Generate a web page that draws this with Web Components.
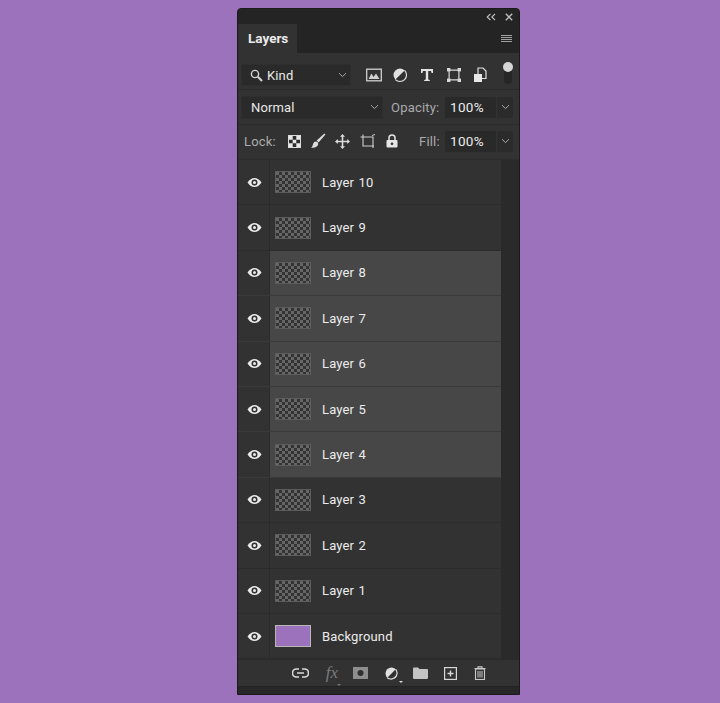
<!DOCTYPE html>
<html>
<head>
<meta charset="utf-8">
<title>Layers</title>
<style>
html, body { margin: 0; height: 100%; }
body {
    background: #9d72bd;
    padding: 8px 0 0 237px;
    box-sizing: border-box;
    overflow: hidden;
    font-family: Roboto, "Open Sans", sans-serif;
}
</style>
</head>
<body>
<ps-panel>
    <ps-tabbar label="Layers"></ps-tabbar>
    <ps-filterbar></ps-filterbar>
    <ps-blendbar></ps-blendbar>
    <ps-lockbar></ps-lockbar>
    <ps-layerlist>
        <ps-layer name="Layer 10"></ps-layer>
        <ps-layer name="Layer 9"></ps-layer>
        <ps-layer name="Layer 8" selected></ps-layer>
        <ps-layer name="Layer 7" selected></ps-layer>
        <ps-layer name="Layer 6" selected></ps-layer>
        <ps-layer name="Layer 5" selected></ps-layer>
        <ps-layer name="Layer 4" selected></ps-layer>
        <ps-layer name="Layer 3"></ps-layer>
        <ps-layer name="Layer 2"></ps-layer>
        <ps-layer name="Layer 1"></ps-layer>
        <ps-layer name="Background" fill></ps-layer>
    </ps-layerlist>
    <ps-footer></ps-footer>
</ps-panel>

<script>
const chevron = `<svg width="9" height="6" viewBox="0 0 9 6" fill="none" stroke="#a8a8a8" stroke-width="1"><path d="M1 1.200 4.500 4.600 8 1.200"/></svg>`

function makeEl(name, css, html) {
    class El extends HTMLElement {
        constructor() {
            super()
            this.attachShadow({mode: 'open'})
            this.shadowRoot.innerHTML = `<style>${css}</style>${typeof html == "function" ? html(this) : html}`
        }
    }
    customElements.define(name, El)
}

makeEl("ps-panel", `
:host {
    display: flex;
    flex-direction: column;
    width: 283px;
    height: 687px;
    box-sizing: border-box;
    border: 1px solid #1a1a1a;
    border-radius: 4px 4px 0 0;
    background: #262626;
    color: #e6e6e6;
    overflow: hidden;
}
`, `<slot></slot>`)

makeEl("ps-tabbar", `
:host { display: block; flex: none; background: #242424; }
.top {
    height: 15px;
    display: flex;
    justify-content: flex-end;
    align-items: center;
    gap: 9px;
    padding-right: 6px;
}
.tabs {
    height: 29px;
    display: flex;
    justify-content: space-between;
    align-items: center;
    padding-right: 7px;
}
.tab {
    width: 59px;
    height: 29px;
    line-height: 28px;
    background: #323232;
    box-sizing: border-box;
    padding-left: 10px;
    font-size: 13.5px;
    font-weight: 700;
    color: #eaeaea;
}
`, host => `
<div class="top">
    <svg width="10" height="8" viewBox="0 0 10 8" fill="none" stroke="#bdbdbd" stroke-width="1.100"><path d="M4.400 1 1.200 4l3.200 3M9 1 5.800 4 9 7"/></svg>
    <svg width="8" height="8" viewBox="0 0 8 8" fill="none" stroke="#bdbdbd" stroke-width="1.400"><path d="M.8.8l6.400 6.400M7.200.8.8 7.200"/></svg>
</div>
<div class="tabs">
    <div class="tab">${host.getAttribute("label")}</div>
    <svg width="11" height="8" viewBox="0 0 11 8" stroke="#a0a0a0" stroke-width="1"><path d="M0 .5h11M0 2.500h11M0 4.500h11M0 6.500h11"/></svg>
</div>`)

makeEl("ps-select", `
:host {
    display: flex;
    align-items: center;
    justify-content: space-between;
    box-sizing: border-box;
    background: #2a2a2a;
    border: 1px solid #2e2e2e;
    border-radius: 2px;
    height: 23px;
    padding: 0 3px 0 9px;
    font-size: 13px;
    letter-spacing: .15px;
    color: #e8e8e8;
}
.left { display: flex; align-items: center; gap: 4px; line-height: 23px; padding-top: 1px; }
`, `<div class="left"><slot></slot></div>${chevron}`)

makeEl("ps-percent", `
:host { display: flex; gap: 1px; flex: none; }
.val {
    width: 51px;
    height: 21px;
    line-height: 21px;
    box-sizing: border-box;
    padding-left: 5px;
    background: #292929;
    border-radius: 2px;
    font-size: 13.5px;
    letter-spacing: .3px;
    color: #ececec;
}
.arr {
    width: 16px;
    height: 21px;
    display: flex;
    align-items: center;
    justify-content: center;
    background: #2b2b2b;
    border-radius: 2px;
}
`, `<div class="val"><slot></slot></div><div class="arr">${chevron}</div>`)

makeEl("ps-filterbar", `
:host {
    display: flex;
    flex: none;
    align-items: center;
    height: 37px;
    box-sizing: border-box;
    padding: 7px 0 0 3px;
    background: #323232;
    border-bottom: 1px solid #2a2a2a;
}
ps-select { width: 110px; flex: none; height: 22px; padding-left: 8px; }
.icons { display: flex; align-items: center; margin-left: 15px; gap: 11px; }
.icons svg { display: block; flex: none; }
.sw { width: 8px; height: 22px; margin-left: 6px; margin-top: -4px; border-radius: 4px; background: #262626; position: relative; flex: none; }
.sw i { position: absolute; left: -1px; top: 0; width: 10px; height: 10px; border-radius: 50%; background: #d6d6d6; }
`, `
<ps-select>
    <svg width="13" height="13" viewBox="0 0 13 13" fill="none" stroke="#d4d4d4"><circle cx="5" cy="5" r="3.600" stroke-width="1.400"/><path d="M7.800 7.800 12 12" stroke-width="2"/></svg>
    <span>Kind</span>
</ps-select>
<div class="icons">
    <svg width="16" height="14" viewBox="0 0 16 14"><rect x=".7" y="1.200" width="14.600" height="11.600" fill="none" stroke="#d0d0d0" stroke-width="1.300"/><path d="M2.500 11 5.500 5.500 7.500 9 10 5.500 13.500 11z" fill="#d0d0d0"/></svg>
    <svg width="16" height="16" viewBox="0 0 16 16" style="margin-left:-1px"><circle cx="8" cy="8" r="6.500" fill="#e0e0e0"/><path d="M12.600 3.400A6.500 6.500 0 0 1 3.400 12.600z" fill="#303030"/><path d="M12.600 3.400A6.500 6.500 0 0 1 3.400 12.600" fill="none" stroke="#e0e0e0" stroke-width="1.200"/></svg>
    <svg width="16" height="14" viewBox="0 0 16 14" fill="#e4e4e4"><path d="M2 1h12v4h-1.400l-.6-2H9.200v8.600l1.600.4v1H5.200v-1l1.600-.4V3H4l-.6 2H2z"/></svg>
    <svg width="16" height="16" viewBox="0 0 16 16" fill="#d8d8d8"><path d="M3 2.500h10v1.200H3zM3 12.300h10v1.200H3zM2.500 3h1.200v10H2.500zM12.300 3h1.200v10h-1.200z"/><rect x="1" y="1" width="3.400" height="3.400"/><rect x="11.600" y="1" width="3.400" height="3.400"/><rect x="1" y="11.600" width="3.400" height="3.400"/><rect x="11.600" y="11.600" width="3.400" height="3.400"/></svg>
    <svg width="14" height="16" viewBox="0 0 14 16"><path d="M5 1h5l3 3v7.500H8V7.500H5z" fill="none" stroke="#e0e0e0" stroke-width="1.200"/><rect x="1" y="7" width="8" height="8" fill="#e8e8e8"/></svg>
    <div class="sw"><i></i></div>
</div>`)

makeEl("ps-blendbar", `
:host {
    display: flex;
    flex: none;
    align-items: center;
    height: 35px;
    box-sizing: border-box;
    padding: 0 6px 0 3px;
    background: #323232;
    border-bottom: 1px solid #2a2a2a;
}
ps-select { width: 142px; flex: none; }
.lbl { margin-left: 8px; width: 54px; font-size: 13px; letter-spacing: .2px; color: #ababab; }
`, `<ps-select>Normal</ps-select><span class="lbl">Opacity:</span><ps-percent>100%</ps-percent>`)

makeEl("ps-lockbar", `
:host {
    display: flex;
    flex: none;
    align-items: center;
    height: 34px;
    box-sizing: border-box;
    padding: 0 6px 2px 6px;
    background: #323232;
}
.lbl { font-size: 13px; letter-spacing: .2px; color: #ababab; }
.lock { width: 38px; }
.icons { display: flex; align-items: center; width: 137px; }
.icons span { width: 24px; display: flex; justify-content: center; flex: none; }
.fill { width: 26px; }
svg { display: block; }
`, `
<span class="lbl lock">Lock:</span>
<div class="icons">
    <span><svg width="13" height="13" viewBox="0 0 13 13"><rect x=".5" y=".5" width="12" height="12" fill="#2e2e2e" stroke="#dcdcdc"/><path d="M1 1h3.700v3.700H1zM8.300 1H12v3.700H8.300zM4.700 4.700h3.600v3.600H4.700zM1 8.300h3.700V12H1zM8.300 8.300H12V12H8.300z" fill="#e8e8e8"/></svg></span>
    <span><svg width="16" height="16" viewBox="0 0 16 16" fill="#dcdcdc"><path d="M15 .8c.4.3.3.8 0 1.200L8.600 9.400 6.700 7.600 13.800 1c.4-.3.8-.5 1.200-.2z"/><path d="M5.800 8.500c1.500 0 2.500 1 2.400 2.400-.2 2.500-3.500 4.200-7.200 3.800 1.400-.9 1.500-2 2-3.500.4-1.400 1.400-2.700 2.800-2.700z"/></svg></span>
    <span><svg width="15" height="15" viewBox="0 0 15 15" fill="#dcdcdc"><path d="M7.500 0 10 2.800H8.300v3.900h3.900V5L15 7.500 12.200 10V8.300H8.300v3.900H10L7.500 15 5 12.200h1.700V8.300H2.800V10L0 7.500 2.800 5v1.700h3.900V2.800H5z"/></svg></span>
    <span style="margin-left:2px"><svg width="16" height="15" viewBox="0 0 16 15" fill="none" stroke="#d0d0d0" stroke-width="1.100"><path d="M3 .5v11.500h11M.5 3H13v11"/><path d="M12 1.500l3-1" stroke-width="1"/></svg></span>
    <span><svg width="12" height="14" viewBox="0 0 12 14"><path d="M3 6V4a3 3 0 0 1 6 0v2" fill="none" stroke="#e6e6e6" stroke-width="1.500"/><rect x=".5" y="6" width="11" height="7.500" rx="1" fill="#e6e6e6"/><circle cx="6" cy="9.700" r="1.300" fill="#333"/></svg></span>
</div>
<span class="lbl fill">Fill:</span><ps-percent>100%</ps-percent>`)

makeEl("ps-layerlist", `
:host {
    display: flex;
    flex: none;
    background: #323232;
    border-top: 1px solid #2d2d2d;
    height: 500px;
    box-sizing: border-box;
}
.rows { width: 263px; flex: none; }
.bar { flex: 1; background: #2a2a2a; }
`, `<div class="rows"><slot></slot></div><div class="bar"></div>`)

class PsLayer extends HTMLElement {
    constructor() {
        super()
        this.attachShadow({mode: 'open'})
        let thumb = this.hasAttribute("fill") ? "thumb solid" : "thumb"
        this.shadowRoot.innerHTML = `
<style>
:host { display: flex; height: 45.4px; box-sizing: border-box; border-bottom: 1px solid #2c2c2c; }
:host([selected]) { border-bottom-color: #3a3a3a; }
.eye { width: 32px; flex: none; display: flex; align-items: center; justify-content: center; border-right: 1px solid #2b2b2b; box-sizing: border-box; padding-left: 2px; background: #323232; }
.body { flex: 1; display: flex; align-items: center; padding-left: 5px; }
:host([selected]) .body { background: #474747; }
.thumb {
    width: 36px;
    height: 22px;
    flex: none;
    box-sizing: border-box;
    border: 1px solid #5c5c5c;
    background-color: #666;
    background-image: conic-gradient(#333 25%, transparent 0 50%, #333 0 75%, transparent 0);
    background-size: 6px 6px;
}
.solid { background: #9d72bd; border-color: #b7b7b7; }
.name { margin-left: 11px; font-size: 13px; letter-spacing: .15px; word-spacing: 1px; color: #ececec; }
</style>
<div class="eye"><svg width="15" height="11" viewBox="0 0 15 10"><path d="M.5 5C2.500 2 5 .5 7.500.5S12.500 2 14.500 5c-2 3-4.500 4.500-7 4.500S2.500 8 .5 5z" fill="#eaeaea"/><circle cx="7.500" cy="5" r="3" fill="#303030"/><circle cx="7.500" cy="5" r="1.500" fill="#eaeaea"/></svg></div>
<div class="body"><div class="${thumb}"></div><span class="name">${this.getAttribute("name")}</span></div>`
    }
}
customElements.define("ps-layer", PsLayer)

makeEl("ps-footer", `
:host {
    display: block;
    flex: 1;
    background: #272727;
}
.row {
    height: 28px;
    box-sizing: border-box;
    background: #323232;
    border-top: 1px solid #2a2a2a;
    border-bottom: 1px solid #222;
    display: flex;
    align-items: center;
}
.row span { position: relative; flex: none; display: flex; justify-content: center; align-items: center; width: 30px; }
.fx { font-family: "Liberation Serif", serif; font-style: italic; font-size: 17px; color: #7c7c7c; }
svg { display: block; }
.tri { position: absolute; right: 5px; bottom: -3px; width: 0; height: 0; border: 2.500px solid transparent; border-top-color: #ddd; border-bottom: 0; }
`, `
<div class="row">
    <span style="margin-left:47px"><svg width="17" height="10" viewBox="0 0 17 10" fill="none" stroke="#d8d8d8" stroke-width="1.600"><path d="M7 1H4.500a4 4 0 0 0 0 8H7M10 1h2.500a4 4 0 0 1 0 8H10M5 5h7"/></svg></span>
    <span class="fx" style="margin-left:2px;margin-right:-2px">fx<i class="tri" style="right:6px;border-top-color:#777"></i></span>
    <span><svg width="15" height="12" viewBox="0 0 15 12"><rect width="15" height="12" fill="#8e8e8e"/><circle cx="7.500" cy="6" r="3" fill="#303030"/></svg></span>
    <span style="margin-left:1px;margin-right:-1px"><svg width="15" height="15" viewBox="0 0 15 15"><circle cx="7.500" cy="7.500" r="6" fill="#e0e0e0"/><path d="M11.700 3.300A6 6 0 0 1 3.300 11.700z" fill="#303030"/><path d="M11.700 3.300A6 6 0 0 1 3.300 11.700" fill="none" stroke="#e0e0e0" stroke-width="1.200"/></svg><i class="tri" style="right:3px;bottom:-2px"></i></span>
    <span><svg width="15" height="12" viewBox="0 0 15 12" fill="#c4c4c4"><path d="M0 1.500Q0 .5 1 .5h4l1.500 1.500H14q1 0 1 1V11q0 1-1 1H1q-1 0-1-1z"/></svg></span>
    <span><svg width="13" height="13" viewBox="0 0 13 13" fill="none" stroke="#d8d8d8"><rect x=".6" y=".6" width="11.800" height="11.800" stroke-width="1.200"/><path d="M6.500 3.500v6M3.500 6.500h6" stroke-width="1.400"/></svg></span>
    <span><svg width="12" height="14" viewBox="0 0 12 14" fill="none" stroke="#c8c8c8"><path d="M.5 2.500h11M4 2.500V.8h4v1.700" stroke-width="1.200"/><rect x="1.500" y="3" width="9" height="10.500" stroke-width="1.100"/><path d="M4 5v6.500M6 5v6.500M8 5v6.500" stroke-width="1"/></svg></span>
</div>`)
</script>
</body>
</html>
